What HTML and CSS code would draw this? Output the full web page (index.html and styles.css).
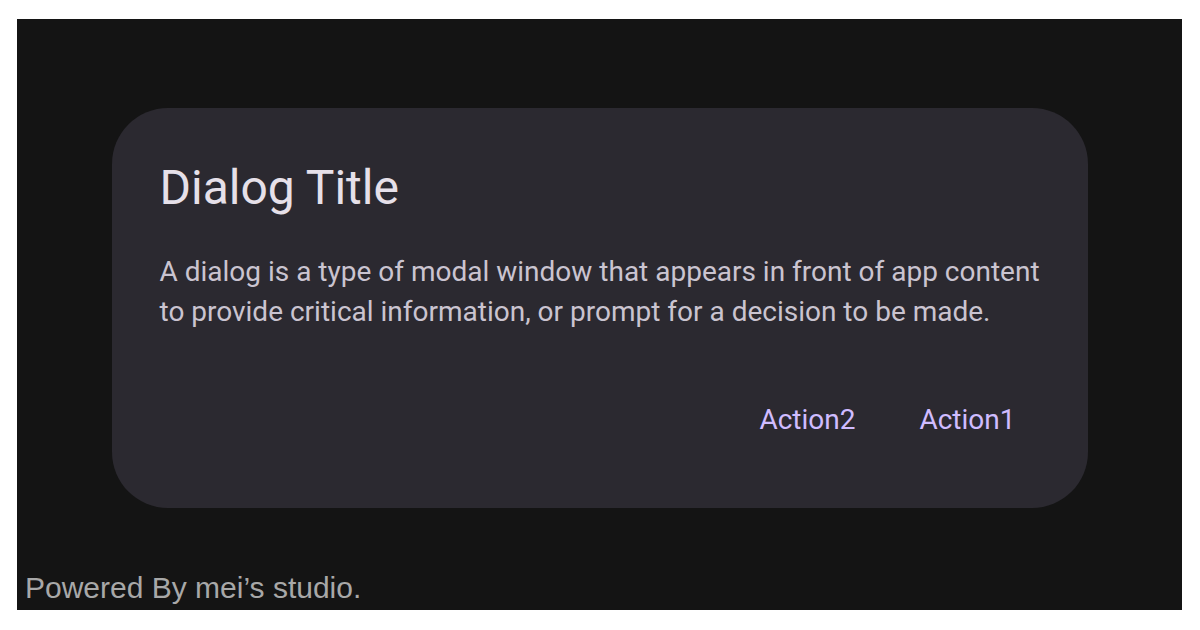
FILE: index.html
```html
<!DOCTYPE html>
<html lang="en">
<head>
<meta charset="utf-8">
<title>Dialog</title>
<link rel="stylesheet" href="styles.css">
</head>
<body>
<div class="stage">
  <div class="dialog">
    <h1 class="dialog-title">Dialog Title</h1>
    <p class="dialog-body">A dialog is a type of modal window that appears in front of app content to provide critical information, or prompt for a decision to be made.</p>
    <div class="dialog-actions">
      <button class="action">Action2</button>
      <button class="action">Action1</button>
    </div>
  </div>
  <div class="footer">Powered By mei’s studio.</div>
</div>
</body>
</html>
```
FILE: styles.css
```css
html, body {
  margin: 0;
  padding: 0;
  background: #ffffff;
}
.stage {
  margin: 19px 18px 0 17px;
  height: 591px;
  background: #141414;
  box-sizing: border-box;
  padding-top: 89px;
  display: flex;
  flex-direction: column;
}
.dialog {
  align-self: center;
  width: 976px;
  box-sizing: border-box;
  background: #2b2930;
  border-radius: 56px;
  padding: 48px;
  font-family: Roboto, "Noto Sans", sans-serif;
}
.dialog-title {
  margin: 0;
  font-size: 48px;
  line-height: 64px;
  font-weight: 400;
  color: #e6e0e9;
}
.dialog-body {
  margin: 32px -8px 0 0;
  font-size: 28px;
  line-height: 40px;
  color: #cac4d0;
  letter-spacing: 0;
}
.dialog-actions {
  margin-top: 48px;
  display: flex;
  justify-content: flex-end;
  gap: 16px;
}
.action {
  background: none;
  border: none;
  height: 80px;
  padding: 0 24px;
  font-family: Roboto, "Noto Sans", sans-serif;
  font-size: 28px;
  line-height: 40px;
  font-weight: 400;
  letter-spacing: 0;
  color: #d0bcff;
}
.footer {
  margin-top: auto;
  padding: 0 0 5px 8px;
  font-family: "Liberation Sans", Arial, sans-serif;
  font-size: 30px;
  line-height: 34px;
  color: #a8a8a8;
}
```
